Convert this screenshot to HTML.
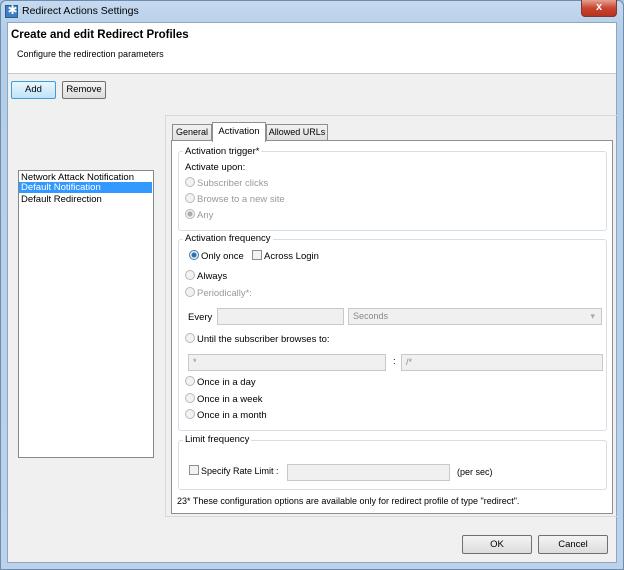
<!DOCTYPE html>
<html><head><style>
*{box-sizing:border-box;margin:0;padding:0}
body{width:624px;height:570px;overflow:hidden;background:#aac4e0;font-family:"Liberation Sans",sans-serif;font-size:9.5px;color:#000;position:relative}
.a{position:absolute;white-space:nowrap}
.win{left:0;top:0;width:624px;height:570px;background:linear-gradient(#c6daf0,#b4cde8 30px,#bcd2ea);border:1px solid #6d8cb0;border-radius:6px 6px 0 0}
.body{left:7px;top:22px;width:610px;height:541px;background:#f0f0f0;border:1px solid #8ea6c2}
.btn{border:1px solid #707070;border-radius:2px;background:linear-gradient(#f4f4f4,#dcdcdc);text-align:center;line-height:16px;font-size:9.5px}
.grp{border:1px solid #d5dfe5;border-radius:3px;background:#fff}
.lg{background:#fff;padding:0 2px;font-size:9.5px}
.r{width:10px;height:10px;border-radius:50%;border:1px solid #b8b8b8;background:#f2f2f2;margin-top:-2px}
.t{font-size:9.5px}
.g{color:#999}
.in{border:1px solid #c8c8c8;background:#f0f0f0;height:17px;color:#888;padding-left:4px;line-height:15px;font-size:9px}
</style></head><body>
<div class="a win"></div>
<div class="a" style="left:5px;top:5px;width:13px;height:13px;background:#3d7fc0;border:1px solid #2a5d94"></div>
<div class="a" style="left:6px;top:3px;color:#fff;font-size:12px;width:13px;text-align:center">✱</div>
<div class="a" style="left:22px;top:5px;font-size:10.5px">Redirect Actions Settings</div>
<div class="a" style="left:581px;top:0;width:36px;height:17px;background:linear-gradient(#e6a293,#c9452f 50%,#b83220);border:1px solid #7a3a30;border-top:none;border-radius:0 0 4px 4px;color:#fff;font-weight:bold;text-align:center;font-size:11px;line-height:15px">x</div>
<div class="a body"></div>
<div class="a" style="left:8px;top:23px;width:608px;height:51px;background:#fff;border-bottom:1px solid #c8c8c8"></div>
<div class="a" style="left:11px;top:29px;font-size:11.5px;font-weight:bold">Create and edit Redirect Profiles</div>
<div class="a" style="left:17px;top:49px;font-size:9px">Configure the redirection parameters</div>
<div class="a btn" style="left:11px;top:81px;width:45px;height:18px;border-color:#3c9fd6;background:linear-gradient(#eaf6fd,#bfe3f8)">Add</div>
<div class="a btn" style="left:62px;top:81px;width:44px;height:18px">Remove</div>
<div class="a" style="left:18px;top:170px;width:136px;height:288px;background:#fff;border:1px solid #828790"></div>
<div class="a t" style="left:21px;top:172px">Network Attack Notification</div>
<div class="a" style="left:19px;top:182px;width:133px;height:11px;background:#3399ff"></div>
<div class="a t" style="left:21px;top:182px;color:#fff">Default Notification</div>
<div class="a t" style="left:21px;top:194px">Default Redirection</div>
<div class="a" style="left:165px;top:115px;width:452px;height:402px;border:1px solid #d8d8d8;border-right:none"></div>
<div class="a" style="left:172px;top:124px;width:40px;height:17px;border:1px solid #8e8f8f;background:linear-gradient(#f2f2f2,#e0e0e0);font-size:9px;text-align:center;line-height:15px">General</div>
<div class="a" style="left:266px;top:124px;width:62px;height:17px;border:1px solid #8e8f8f;background:linear-gradient(#f2f2f2,#e0e0e0);font-size:9px;text-align:center;line-height:15px">Allowed URLs</div>
<div class="a" style="left:171px;top:140px;width:442px;height:374px;background:#fff;border:1px solid #8e8f8f"></div>
<div class="a" style="left:212px;top:122px;width:54px;height:20px;border:1px solid #8e8f8f;border-bottom:none;background:#fff;font-size:9.5px;text-align:center;line-height:17px">Activation</div>
<div class="a grp" style="left:178px;top:151px;width:429px;height:80px"></div>
<div class="a lg" style="left:183px;top:146px">Activation trigger*</div>
<div class="a t" style="left:185px;top:162px">Activate upon:</div>
<div class="a r" style="left:185px;top:179px"></div><div class="a t g" style="left:197px;top:178px">Subscriber clicks</div>
<div class="a r" style="left:185px;top:195px"></div><div class="a t g" style="left:197px;top:194px">Browse to a new site</div>
<div class="a r" style="left:185px;top:211px;background:radial-gradient(#aaa 2px,#f2f2f2 3px)"></div><div class="a t g" style="left:197px;top:210px">Any</div>
<div class="a grp" style="left:178px;top:239px;width:429px;height:192px"></div>
<div class="a lg" style="left:183px;top:233px">Activation frequency</div>
<div class="a r" style="left:189px;top:252px;border-color:#4a7aa6;background:radial-gradient(#2a6fb0 2px,#e8f0f8 3px)"></div><div class="a t" style="left:201px;top:251px">Only once</div>
<div class="a" style="left:252px;top:250px;width:10px;height:10px;border:1px solid #8e8f8f;background:#f2f2f2"></div><div class="a t" style="left:264px;top:251px">Across Login</div>
<div class="a r" style="left:185px;top:272px"></div><div class="a t" style="left:197px;top:271px">Always</div>
<div class="a r" style="left:185px;top:289px"></div><div class="a t g" style="left:197px;top:288px">Periodically*:</div>
<div class="a t" style="left:188px;top:312px">Every</div>
<div class="a in" style="left:217px;top:308px;width:127px"></div>
<div class="a in" style="left:348px;top:308px;width:254px">Seconds<span style="position:absolute;right:6px;color:#aaa">▾</span></div>
<div class="a r" style="left:185px;top:335px"></div><div class="a t" style="left:197px;top:334px">Until the subscriber browses to:</div>
<div class="a in" style="left:188px;top:354px;width:198px">*</div>
<div class="a t" style="left:393px;top:356px">:</div>
<div class="a in" style="left:401px;top:354px;width:202px">/*</div>
<div class="a r" style="left:185px;top:378px"></div><div class="a t" style="left:197px;top:377px">Once in a day</div>
<div class="a r" style="left:185px;top:395px"></div><div class="a t" style="left:197px;top:394px">Once in a week</div>
<div class="a r" style="left:185px;top:411px"></div><div class="a t" style="left:197px;top:410px">Once in a month</div>
<div class="a grp" style="left:178px;top:440px;width:429px;height:50px"></div>
<div class="a lg" style="left:183px;top:434px">Limit frequency</div>
<div class="a" style="left:189px;top:465px;width:10px;height:10px;border:1px solid #8e8f8f;background:#f2f2f2"></div>
<div class="a t" style="left:201px;top:466px;font-size:9px">Specify Rate Limit :</div>
<div class="a in" style="left:287px;top:464px;width:163px"></div>
<div class="a t" style="left:457px;top:467px;font-size:9px">(per sec)</div>
<div class="a t" style="left:177px;top:496px;font-size:9px">23* These configuration options are available only for redirect profile of type "redirect".</div>
<div class="a btn" style="left:462px;top:535px;width:70px;height:19px;line-height:17px">OK</div>
<div class="a btn" style="left:538px;top:535px;width:70px;height:19px;line-height:17px">Cancel</div>
</body></html>
